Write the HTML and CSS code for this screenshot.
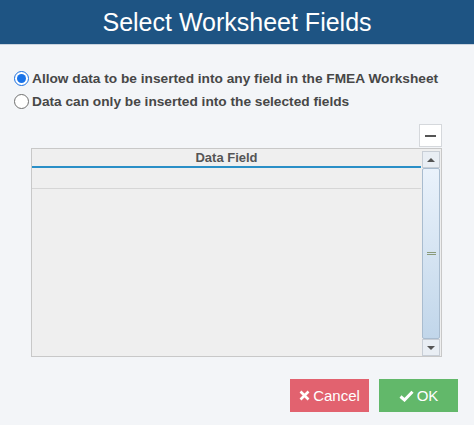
FILE: index.html
```html
<!DOCTYPE html>
<html>
<head>
<meta charset="utf-8">
<link rel="stylesheet" href="styles.css">
</head>
<body>
<div class="dialog">
  <div class="header">Select Worksheet Fields</div>
  <div class="content">
    <label class="radio-row"><span class="radio checked"></span><span>Allow data to be inserted into any field in the FMEA Worksheet</span></label>
    <label class="radio-row"><span class="radio"></span><span>Data can only be inserted into the selected fields</span></label>
    <div class="toolbar"><button class="minus-btn"><span class="minus"></span></button></div>
    <div class="grid">
      <div class="grid-main">
        <div class="grid-head">Data Field</div>
        <div class="grid-row"></div>
      </div>
      <div class="scrollbar">
        <div class="sb-btn"><span class="tri-up"></span></div>
        <div class="sb-thumb"><span class="grip"></span></div>
        <div class="sb-btn"><span class="tri-down"></span></div>
      </div>
    </div>
    <div class="actions">
      <button class="btn cancel"><svg width="11" height="11" viewBox="0 0 11 11"><path d="M1.5 1.5 L9.5 9.5 M9.5 1.5 L1.5 9.5" stroke="#fff" stroke-width="2.6" stroke-linecap="butt"/></svg>Cancel</button>
      <button class="btn ok"><svg width="15" height="12" viewBox="0 0 15 12"><path d="M1.5 6.5 L5.5 10 L13.5 1.8" fill="none" stroke="#fff" stroke-width="3"/></svg>OK</button>
    </div>
  </div>
</div>
</body>
</html>
```

FILE: styles.css
```css
html, body {
  margin: 0;
  padding: 0;
  background: #ffffff;
}
body {
  font-family: "Liberation Sans", Arial, sans-serif;
}
.dialog {
  width: 474px;
  height: 425px;
  background: #f3f5f8;
  display: flex;
  flex-direction: column;
}
.header {
  height: 45px;
  background: #1e5483;
  color: #ffffff;
  font-size: 25px;
  line-height: 45px;
  text-align: center;
  border-bottom: 1px solid #c9d3de;
  box-sizing: border-box;
}
.content {
  flex: 1;
  padding: 26px 0 0 14px;
  display: flex;
  flex-direction: column;
}
.radio-row {
  display: flex;
  align-items: center;
  gap: 3px;
  font-size: 13.7px;
  font-weight: bold;
  color: #474747;
  height: 15px;
  margin-bottom: 8px;
}
.radio {
  width: 15px;
  height: 15px;
  border-radius: 50%;
  border: 1px solid #6f6f6f;
  background: #fff;
  box-sizing: border-box;
  flex: none;
  position: relative;
}
.radio.checked {
  border: 1px solid #1a6fe0;
  background: #fff;
}
.radio.checked::after {
  content: "";
  position: absolute;
  left: 2px;
  top: 2px;
  width: 9px;
  height: 9px;
  border-radius: 50%;
  background: #1a73e8;
}
.toolbar {
  display: flex;
  justify-content: flex-end;
  padding-right: 32px;
  margin-top: 7px;
}
.minus-btn {
  width: 23px;
  height: 23px;
  background: #ffffff;
  border: 1px solid #d5d8dc;
  padding: 0;
  display: flex;
  align-items: center;
  justify-content: center;
}
.minus {
  width: 11px;
  height: 2px;
  background: #555;
}
.grid {
  margin-top: 1px;
  margin-left: 17px;
  width: 411px;
  height: 209px;
  border: 1px solid #c8c8c8;
  background: #efefef;
  display: flex;
  box-sizing: border-box;
}
.grid-main {
  flex: 1;
  display: flex;
  flex-direction: column;
}
.grid-head {
  height: 17px;
  line-height: 18px;
  text-align: center;
  font-size: 13px;
  font-weight: bold;
  color: #555;
  border-bottom: 2px solid #2a8fc7;
}
.grid-row {
  height: 20px;
  border-bottom: 1px solid #d6d6d6;
}
.scrollbar {
  width: 18px;
  margin: 2px 1px 0 1px;
  display: flex;
  flex-direction: column;
}
.sb-btn {
  height: 17px;
  background: #e9eef4;
  border: 1px solid #c8ced6;
  box-sizing: border-box;
  display: flex;
  align-items: center;
  justify-content: center;
}
.tri-up {
  width: 0; height: 0;
  border-left: 4px solid transparent;
  border-right: 4px solid transparent;
  border-bottom: 4px solid #555;
}
.tri-down {
  width: 0; height: 0;
  border-left: 4px solid transparent;
  border-right: 4px solid transparent;
  border-top: 4px solid #555;
}
.sb-thumb {
  flex: 1;
  background: linear-gradient(#eaf2fb, #c1d6ea);
  border: 1px solid #a9bccf;
  border-radius: 2px;
  box-sizing: border-box;
  display: flex;
  align-items: center;
  justify-content: center;
}
.grip {
  width: 9px;
  height: 3px;
  border-top: 1px solid #8a9a7a;
  border-bottom: 1px solid #8a9a7a;
  box-sizing: border-box;
}
.actions {
  display: flex;
  justify-content: flex-end;
  gap: 10px;
  padding-right: 16px;
  margin-top: 22px;
}
.btn {
  width: 79px;
  height: 33px;
  border: none;
  color: #fff;
  font-family: "Liberation Sans", Arial, sans-serif;
  font-size: 15px;
  display: flex;
  align-items: center;
  justify-content: center;
  gap: 3px;
  padding: 0;
}
.cancel { background: #e2626f; }
.ok { background: #62b86a; }
```
